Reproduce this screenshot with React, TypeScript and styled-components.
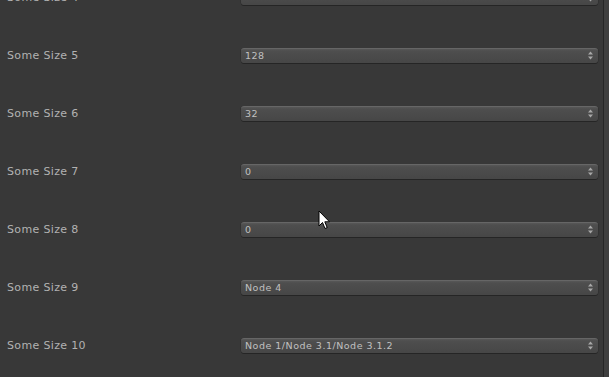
import React from 'react'
import styled, { createGlobalStyle } from 'styled-components'

const GlobalStyle = createGlobalStyle`
  html, body {
    margin: 0;
    padding: 0;
    background: #383838;
    overflow: hidden;
  }
  body {
    font-family: 'DejaVu Sans', 'Liberation Sans', sans-serif;
  }
`

const Inspector = styled.div`
  position: relative;
  display: flex;
  width: 609px;
  height: 377px;
  background: #383838;
  overflow: hidden;
`

const Content = styled.div`
  flex: 1;
  display: flex;
  flex-direction: column;
  margin-top: -32px;
`

const Row = styled.div`
  display: flex;
  align-items: center;
  height: 58px;
  flex-shrink: 0;
`

const Label = styled.div`
  width: 241px;
  padding-left: 7px;
  box-sizing: border-box;
  font-size: 11px;
  color: #b2b2b2;
  letter-spacing: 0.35px;
  white-space: nowrap;
  margin-top: 1px;
`

const Popup = styled.div`
  position: relative;
  width: 357px;
  height: 15px;
  box-sizing: border-box;
  border-radius: 3px;
  background: linear-gradient(#575757 0, #4e4e4e 2px, #474747 13px);
  border-top: 1px solid #666;
  box-shadow: 0 1px 0 #252525, -0.5px 0 0 #2c2c2c, 0.5px 0 0 #2c2c2c;
  display: flex;
  align-items: center;
  padding-left: 4px;
  font-size: 9.5px;
  color: #c0c0c0;
  letter-spacing: 0.5px;
  white-space: nowrap;
`

const Arrows = styled.svg`
  position: absolute;
  right: 5px;
  top: 2px;
`

const Scrollbar = styled.div`
  width: 5px;
  border-left: 1px solid #262626;
  background: #3f3f3f;
`

const Cursor = styled.svg`
  position: absolute;
  left: 318px;
  top: 210px;
`

const rows = [
  { label: 'Some Size 4', value: '' },
  { label: 'Some Size 5', value: '128' },
  { label: 'Some Size 6', value: '32' },
  { label: 'Some Size 7', value: '0' },
  { label: 'Some Size 8', value: '0' },
  { label: 'Some Size 9', value: 'Node 4' },
  { label: 'Some Size 10', value: 'Node 1/Node 3.1/Node 3.1.2' }
]

export default function App() {
  return (
    <Inspector>
      <GlobalStyle />
      <Content>
        {rows.map((row) => (
          <Row key={row.label}>
            <Label>{row.label}</Label>
            <Popup>
              {row.value}
              <Arrows width="5" height="9" viewBox="0 0 5 9">
                <polygon points="2.5,0.5 5,3.5 0,3.5" fill="#a8a8a8" />
                <polygon points="0,5.5 5,5.5 2.5,8.5" fill="#a8a8a8" />
              </Arrows>
            </Popup>
          </Row>
        ))}
      </Content>
      <Scrollbar />
      <Cursor width="14" height="22" viewBox="0 0 14 22">
        <path d="M1 1 L1 16 L4.5 12.5 L7 18.5 L9.2 17.6 L6.8 11.8 L11.5 11.8 Z" fill="#fff" stroke="#000" strokeWidth="1" strokeLinejoin="miter" />
      </Cursor>
    </Inspector>
  )
}
